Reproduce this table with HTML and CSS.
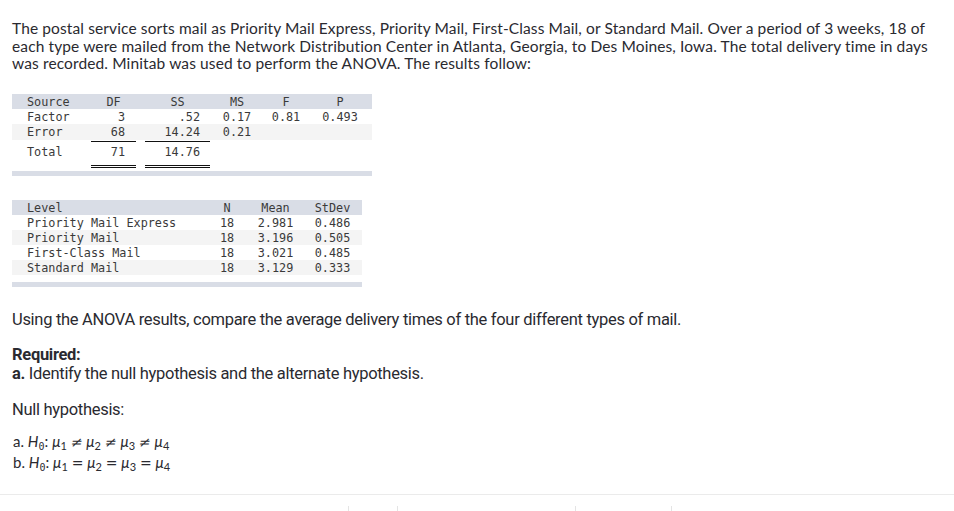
FILE: index.html
```html
<!DOCTYPE html>
<html>
<head>
<meta charset="utf-8">
<link rel="stylesheet" href="styles.css">
</head>
<body>
<div class="page">
  <p class="intro">The postal service sorts mail as Priority Mail Express, Priority Mail, First-Class Mail, or Standard Mail. Over a period of 3 weeks, 18 of each type were mailed from the Network Distribution Center in Atlanta, Georgia, to Des Moines, Iowa. The total delivery time in days was recorded. Minitab was used to perform the ANOVA. The results follow:</p>

  <div class="anova">
    <div class="arow head">
      <span class="src">Source</span><span class="ctr">DF</span><span></span><span class="ctr">SS</span><span class="ctr">MS</span><span class="ctr">F</span><span class="ctr">P</span>
    </div>
    <div class="arow">
      <span class="src">Factor</span><span class="num">3</span><span></span><span class="num ss">.52</span><span class="ctr">0.17</span><span class="ctr">0.81</span><span class="ctr">0.493</span>
    </div>
    <div class="arow stripe err">
      <span class="src">Error</span><span class="num ul">68</span><span></span><span class="num ss ul">14.24</span><span class="ctr">0.21</span><span></span><span></span>
    </div>
    <div class="arow total">
      <span class="src">Total</span><span class="num dul">71</span><span></span><span class="num ss dul">14.76</span><span></span><span></span><span></span>
    </div>
    <div class="endbar"></div>
  </div>

  <div class="means">
    <div class="mrow head">
      <span class="src">Level</span><span class="ctr">N</span><span class="ctr">Mean</span><span class="ctr">StDev</span>
    </div>
    <div class="mrow">
      <span class="src">Priority Mail Express</span><span class="ctr">18</span><span class="ctr">2.981</span><span class="ctr">0.486</span>
    </div>
    <div class="mrow stripe">
      <span class="src">Priority Mail</span><span class="ctr">18</span><span class="ctr">3.196</span><span class="ctr">0.505</span>
    </div>
    <div class="mrow">
      <span class="src">First-Class Mail</span><span class="ctr">18</span><span class="ctr">3.021</span><span class="ctr">0.485</span>
    </div>
    <div class="mrow stripe">
      <span class="src">Standard Mail</span><span class="ctr">18</span><span class="ctr">3.129</span><span class="ctr">0.333</span>
    </div>
    <div class="endbar"></div>
  </div>

  <p class="narrow using">Using the ANOVA results, compare the average delivery times of the four different types of mail.</p>
  <p class="narrow required"><b>Required:</b><br><b>a.</b> Identify the null hypothesis and the alternate hypothesis.</p>
  <p class="narrow nullh">Null hypothesis:</p>

  <ul class="options">
    <li>a. <i>H</i><sub class="z">0</sub>: <i>μ</i><sub>1</sub> <span class="rel">≠</span> <i>μ</i><sub>2</sub> <span class="rel">≠</span> <i>μ</i><sub>3</sub> <span class="rel">≠</span> <i>μ</i><sub>4</sub></li>
    <li>b. <i>H</i><sub class="z">0</sub>: <i>μ</i><sub>1</sub> <span class="eq">=</span> <i>μ</i><sub>2</sub> <span class="eq">=</span> <i>μ</i><sub>3</sub> <span class="eq">=</span> <i>μ</i><sub>4</sub></li>
  </ul>
</div>

<div class="answer">
  <div class="cell first"></div>
  <div class="cell w1"></div>
  <div class="cell w2"></div>
  <div class="cell w3"></div>
  <div class="cell last"></div>
</div>
</body>
</html>
```

FILE: styles.css
```css
* { box-sizing: border-box; }

html, body {
  margin: 0;
  background: #ffffff;
  overflow: hidden;
}

body {
  width: 954px;
  height: 511px;
  color: #333333;
  font-family: Lato, "Open Sans", sans-serif;
}

.page {
  padding: 20px 12px 0 12px;
}

.intro {
  margin: 0;
  width: 925px;
  font-size: 15.5px;
  letter-spacing: 0.12px;
  line-height: 17.5px;
  color: #2a2a30;
}

/* ANOVA table */
.anova {
  margin-top: 21px;
  width: 360px;
  font-family: "DejaVu Sans Mono", "Liberation Mono", monospace;
  font-size: 11.8px;
  color: #3a3a3a;
}

.arow {
  display: grid;
  grid-template-columns: 79px 45px 9px 65px 54px 44px 64px;
  height: 15px;
  line-height: 17px;
}

.arow span, .mrow span {
  white-space: pre;
}

.head {
  background: #d9dde6;
}

.stripe {
  background: #f4f4f4;
}

.src {
  padding-left: 15px;
}

.ctr {
  text-align: center;
}

.num {
  text-align: right;
  padding-right: 11px;
}

.num.ss {
  padding-right: 10px;
}

.arow.err {
  height: 16px;
}

.ul {
  border-bottom: 1px solid #111;
}

.arow.total {
  height: 25px;
  line-height: 25px;
}

.dul {
  border-bottom: 3px double #111;
}

.endbar {
  margin-top: 6px;
  height: 5px;
  background: #d9dde6;
}

/* Means table */
.means {
  margin-top: 24px;
  width: 350px;
  font-family: "DejaVu Sans Mono", "Liberation Mono", monospace;
  font-size: 11.8px;
  color: #3a3a3a;
}

.mrow {
  display: grid;
  grid-template-columns: 194px 42px 55px 59px;
  height: 15px;
  line-height: 16px;
}

.means .endbar {
  margin-top: 7px;
}

/* narrow text */
.narrow {
  margin: 0;
  font-family: Roboto, "Liberation Sans", sans-serif;
  font-size: 16.5px;
  letter-spacing: -0.3px;
  line-height: 19px;
  color: #2a2a30;
}

.narrow b {
  font-weight: bold;
}

.using {
  margin-top: 23px;
}

.required {
  margin-top: 16px;
}

.nullh {
  margin-top: 17px;
}

.options {
  list-style: none;
  margin: 12px 0 0 0;
  padding: 0 0 0 1px;
  font-family: Lato, "Open Sans", sans-serif;
  font-size: 15px;
  line-height: 20px;
  color: #2a2a30;
}

.options i {
  font-style: italic;
}

.options .rel {
  font-family: "DejaVu Sans", sans-serif;
  font-size: 14px;
  display: inline-block;
  transform: skewX(-12deg);
}

.options .eq {
  font-family: "DejaVu Sans", sans-serif;
  font-size: 14px;
}

.options sub {
  font-size: 11px;
  vertical-align: -3px;
  line-height: 0;
}

.options sub.z {
  font-family: "DejaVu Sans Mono", monospace;
  font-size: 10px;
}

/* answer area at bottom */
.answer {
  margin-top: 21px;
  border-top: 1px solid #ebebeb;
  display: flex;
  height: 30px;
  padding-top: 11px;
}

.cell {
  height: 100%;
  border-left: 1px solid #e4e4e4;
}

.cell.first {
  width: 348px;
  border-left: none;
}

.cell.w1 { width: 49px; }
.cell.w2 { width: 178px; }
.cell.w3 { width: 96px; }
.cell.last { flex: 1; }
```
